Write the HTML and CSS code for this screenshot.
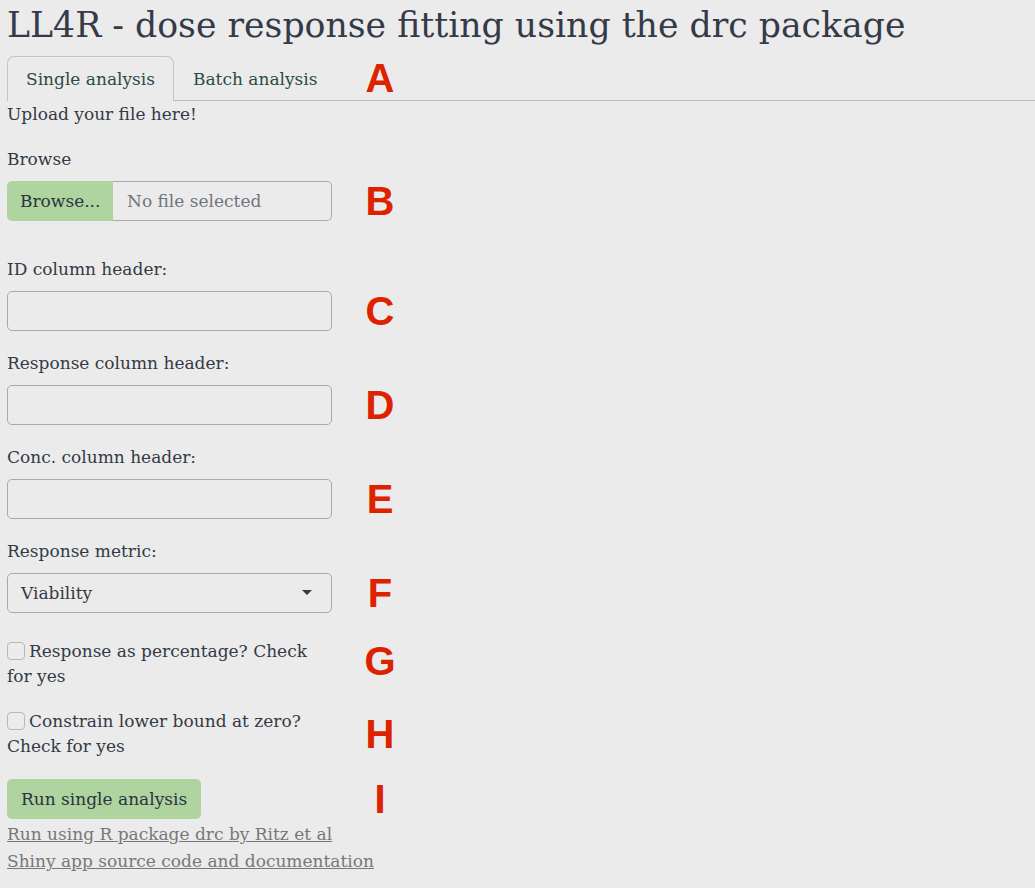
FILE: index.html
```html
<!DOCTYPE html>
<html>
<head>
<meta charset="utf-8">
<link rel="stylesheet" href="styles.css">
</head>
<body>
<h1 class="title">LL4R - dose response fitting using the drc package</h1>
<div class="nav">
  <div class="tabs">
    <div class="tab active">Single analysis</div>
    <div class="tab">Batch analysis</div>
  </div>
  <span class="mark">A</span>
</div>
<div class="content">
  <p class="intro">Upload your file here!</p>

  <div class="group file-group">
    <div class="label">Browse</div>
    <div class="row">
      <div class="control file">
        <span class="file-btn">Browse...</span>
        <span class="file-name">No file selected</span>
      </div>
      <span class="mark">B</span>
    </div>
  </div>

  <div class="group">
    <div class="label">ID column header:</div>
    <div class="row">
      <div class="control input"></div>
      <span class="mark">C</span>
    </div>
  </div>

  <div class="group">
    <div class="label">Response column header:</div>
    <div class="row">
      <div class="control input"></div>
      <span class="mark">D</span>
    </div>
  </div>

  <div class="group">
    <div class="label">Conc. column header:</div>
    <div class="row">
      <div class="control input"></div>
      <span class="mark">E</span>
    </div>
  </div>

  <div class="group select-group">
    <div class="label">Response metric:</div>
    <div class="row">
      <div class="control input select">
        <span>Viability</span>
        <svg class="caret" width="10" height="6" viewBox="0 0 10 6"><path d="M0 0 L10 0 L5 5 Z" fill="#333a45"/></svg>
      </div>
      <span class="mark">F</span>
    </div>
  </div>

  <div class="group">
    <div class="row row-check">
      <div class="check"><span class="box"></span>Response as percentage? Check for yes</div>
      <span class="mark mark-g">G</span>
    </div>
  </div>

  <div class="group">
    <div class="row">
      <div class="check"><span class="box"></span>Constrain lower bound at zero? Check for yes</div>
      <span class="mark">H</span>
    </div>
  </div>

  <div class="row">
    <div class="control-auto"><span class="run-btn">Run single analysis</span></div>
    <span class="mark">I</span>
  </div>

  <div class="links">
    <a href="#">Run using R package drc by Ritz et al</a>
    <a href="#">Shiny app source code and documentation</a>
  </div>
</div>
</body>
</html>
```

FILE: styles.css
```css
html, body {
  margin: 0;
  padding: 0;
  background: #ebebeb;
}
body {
  font-family: "DejaVu Serif", serif;
  font-size: 17px;
  line-height: 24px;
  color: #333a45;
  padding: 0 7px;
}
.title {
  font-weight: normal;
  font-size: 34.7px;
  line-height: 50px;
  margin: 0 0 6px 0;
  color: #343a47;
}
.nav {
  display: flex;
  align-items: center;
  border-bottom: 1px solid #bdbdbd;
  margin-right: -7px;
  height: 44px;
}
.tabs {
  display: flex;
  width: 353px;
  align-self: stretch;
}
.tab {
  padding: 0 18px;
  line-height: 44px;
  color: #2b4a47;
  border: 1px solid transparent;
  border-bottom: none;
  border-radius: 7px 7px 0 0;
  margin-bottom: -1px;
  height: 44px;
  box-sizing: border-box;
}
.tab.active {
  border-color: #c4c4c4;
  background: #ebebeb;
  height: 45px;
}
.mark {
  width: 40px;
  text-align: center;
  font-family: "Liberation Sans", Arial, sans-serif;
  font-weight: bold;
  font-size: 40px;
  line-height: 40px;
  color: #dd2200;
}
.content {
  padding-top: 1px;
}
.intro {
  margin: 0 0 21px 0;
}
.group {
  margin-bottom: 20px;
}
.file-group {
  margin-bottom: 36px;
}
.select-group {
  margin-bottom: 26px;
}
.label {
  margin-bottom: 10px;
}
.row {
  display: flex;
  align-items: center;
}
.control {
  width: 325px;
  height: 40px;
  box-sizing: border-box;
  flex: none;
  margin-right: 28px;
}
.control-auto {
  width: 325px;
  flex: none;
  margin-right: 28px;
}
.input {
  border: 1px solid #a9a9a9;
  border-radius: 5px;
  background: #ebebeb;
}
.select {
  display: flex;
  align-items: center;
  justify-content: space-between;
  padding: 0 19px 0 13px;
}
.file {
  display: flex;
}
.file-btn {
  background: #afd4a0;
  border-radius: 5px 0 0 5px;
  padding: 0 13px;
  line-height: 40px;
  width: 106px;
  box-sizing: border-box;
  color: #2a3340;
  white-space: nowrap;
}
.file-name {
  flex: 1;
  border: 1px solid #a9a9a9;
  border-left: none;
  border-radius: 0 5px 5px 0;
  padding: 0 14px;
  line-height: 38px;
  color: #6f757e;
  white-space: nowrap;
}
.check {
  width: 325px;
  flex: none;
  margin-right: 28px;
  line-height: 25px;
}
.box {
  display: inline-block;
  width: 18px;
  height: 18px;
  border: 1px solid #b8b8b8;
  border-radius: 4px;
  box-sizing: border-box;
  vertical-align: -3px;
  margin-right: 4px;
  background: #ececec;
}
.mark-g {
  align-self: flex-start;
  margin-top: 2px;
}
.run-btn {
  display: inline-block;
  background: #afd4a0;
  border-radius: 5px;
  line-height: 40px;
  padding: 0 14px;
  color: #2a3340;
}
.links {
  display: flex;
  flex-direction: column;
  align-items: flex-start;
  margin-top: 2px;
}
.links a {
  color: #787878;
  line-height: 27px;
  text-decoration: underline;
}
```
